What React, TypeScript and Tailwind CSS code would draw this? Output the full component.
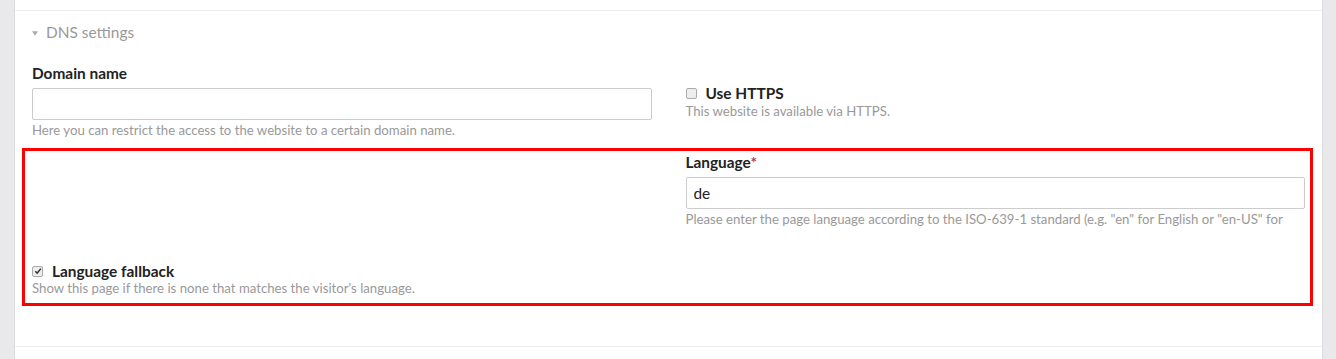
import React from "react";

function Box({ checked }: { checked?: boolean }) {
  return (
    <span className="inline-flex h-[11px] w-[11px] shrink-0 items-center justify-center rounded-[2px] border border-[#aaa] bg-[#eee]">
      {checked && (
        <svg viewBox="0 0 10 10" className="h-[8px] w-[8px]">
          <path d="M1.5 5.2 L4 7.6 L8.6 2" fill="none" stroke="#333" strokeWidth="1.8" />
        </svg>
      )}
    </span>
  );
}

function Help({ children }: { children: React.ReactNode }) {
  return <p className="mt-[2px] text-[13.2px] leading-[16px] text-[#999]">{children}</p>;
}

export default function App() {
  return (
    <div
      className="flex h-[359px] w-[1336px] bg-[#e9e9ec] pl-[14px] pr-[13px]"
      style={{ fontFamily: "Lato, 'Open Sans', sans-serif" }}
    >
      <div className="flex-1 border-x border-[#dcdcdf] bg-white pt-[10px]">
        <fieldset className="border-y border-[#eee] px-[17px] pb-[40px]">
          <div className="mt-[12px] flex h-[20px] items-center text-[15.4px] text-[#999]">
            <svg viewBox="0 0 8 6" className="mr-[8px] h-[5px] w-[6px]">
              <path d="M0 0 H8 L4 6 Z" fill="#aaa" />
            </svg>
            DNS settings
          </div>

          <div className="mt-[21px] grid grid-cols-2 gap-x-[34px]">
            <div>
              <label className="block text-[15.4px] font-bold leading-[18px] text-[#222]">Domain name</label>
              <input
                type="text"
                className="mt-[6px] block h-[32px] w-full rounded-[2px] border border-[#ccc] px-[7px] text-[15.4px] outline-none"
              />
              <Help>Here you can restrict the access to the website to a certain domain name.</Help>
            </div>
            <div className="pt-[20px]">
              <div className="flex items-center gap-[9px] text-[15.4px] font-bold leading-[18px] text-[#222]">
                <Box />
                Use HTTPS
              </div>
              <p className="mt-[1px] text-[13.2px] leading-[16px] text-[#999]">This website is available via HTTPS.</p>
            </div>
          </div>

          <div className="ml-[-10px] mr-[-8px] mt-[10px] border-[3px] border-[#f00] pb-[7px] pl-[7px] pr-[5px] pt-[2px]">
            <div className="grid grid-cols-2 gap-x-[34px]">
              <div />
              <div className="min-w-0">
                <label className="block text-[15.4px] font-bold leading-[18px] text-[#222]">
                  Language<span className="text-[#c33]">*</span>
                </label>
                <input
                  type="text"
                  defaultValue="de"
                  className="mt-[6px] block h-[32px] w-full rounded-[2px] border border-[#ccc] px-[7px] text-[15.4px] text-[#222] outline-none"
                />
                <Help>
                  Please enter the page language according to the ISO-639-1 standard (e.g. "en" for English or "en-US" for
                </Help>
              </div>
            </div>
            <div className="mt-[35px]">
              <div className="flex items-center gap-[9px] text-[15.4px] font-bold leading-[18px] text-[#222]">
                <Box checked />
                Language fallback
              </div>
              <p className="text-[13.2px] leading-[16px] text-[#999]">
                Show this page if there is none that matches the visitor's language.
              </p>
            </div>
          </div>
        </fieldset>
      </div>
    </div>
  );
}
